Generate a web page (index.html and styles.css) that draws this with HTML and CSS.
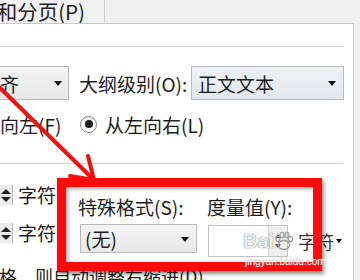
FILE: index.html
```html
<!DOCTYPE html>
<html lang="zh">
<head>
<meta charset="utf-8">
<link rel="stylesheet" href="styles.css">
</head>
<body>
<div class="screen">
  <div class="tabs">
    <div class="tab"><span class="tab-label">缩进和分页(P)</span></div>
  </div>
  <div class="body-row">
    <div class="panel">
      <div class="sep sep-top"></div>
      <div class="row row-general">
        <div class="select select-align"><span class="sel-text">对齐</span><i class="caret"></i></div>
        <span class="label label-level">大纲级别(O):</span>
        <div class="select select-level"><span class="sel-text">正文文本</span><i class="caret"></i></div>
      </div>
      <div class="row row-dir">
        <span class="cut-dir">右向左(F)</span>
        <span class="radio"><span class="radio-dot"></span></span>
        <span class="dir-text">从左向右(L)</span>
      </div>
      <div class="sep sep-mid"></div>
      <div class="indent">
        <div class="col-left">
          <div class="spin-row">
            <span class="mini-spin"><i class="tri-up"></i><i class="tri-down"></i></span>
            <span class="unit-text">字符</span><span class="dotsep">·</span>
          </div>
          <div class="spin-row spin-row2">
            <span class="mini-spin"><i class="tri-up"></i><i class="tri-down"></i></span>
            <span class="unit-text">字符</span><span class="dotsep">·</span>
          </div>
        </div>
        <div class="col-special">
          <div class="label">特殊格式(S):</div>
          <div class="select select-special"><span class="sel-text">(无)</span><i class="caret"></i></div>
        </div>
        <div class="col-value">
          <div class="label">度量值(Y):</div>
          <div class="value-line">
            <div class="spinbox"><span class="spin-btns"><i class="tri-up small"></i><i class="tri-down small"></i></span></div>
            <span class="unit-drop">字符</span><i class="caret caret-unit"></i>
          </div>
        </div>
      </div>
      <div class="bottom-text">网格，则自动调整右缩进(D)</div>
    </div>
    <div class="side"></div>
  </div>

  <div class="highlight"></div>
  <svg class="arrow" width="360" height="280" viewBox="0 0 360 280">
    <line x1="-4" y1="84" x2="94" y2="180" stroke="#f01010" stroke-width="4" stroke-linecap="round"/>
    <line x1="94" y1="180" x2="88" y2="156" stroke="#f01010" stroke-width="4" stroke-linecap="round"/>
    <line x1="94" y1="180" x2="70" y2="176" stroke="#f01010" stroke-width="4" stroke-linecap="round"/>
  </svg>
  <div class="watermark">
    <div class="wm-top">
      <span class="wm-bai">Bai</span>
      <svg class="wm-paw" width="18" height="20" viewBox="0 0 18 20">
        <ellipse cx="9" cy="14" rx="5.5" ry="4.5" fill="none" stroke="#9a9a9a" stroke-width="1.4"/>
        <ellipse cx="3" cy="8" rx="2" ry="2.6" fill="none" stroke="#9a9a9a" stroke-width="1.2"/>
        <ellipse cx="7" cy="4" rx="2" ry="2.6" fill="none" stroke="#9a9a9a" stroke-width="1.2"/>
        <ellipse cx="12" cy="4" rx="2" ry="2.6" fill="none" stroke="#9a9a9a" stroke-width="1.2"/>
        <ellipse cx="15.5" cy="8" rx="2" ry="2.6" fill="none" stroke="#9a9a9a" stroke-width="1.2"/>
      </svg>
    </div>
    <div class="wm-url">jingyan.baidu.com</div>
  </div>
</div>
</body>
</html>
```
FILE: styles.css
```css
* { box-sizing: border-box; }
html, body { margin: 0; padding: 0; }
body {
  width: 360px;
  height: 280px;
  overflow: hidden;
  background: #f0f0f0;
  font-family: "Noto Sans CJK SC", "Noto Sans", sans-serif;
  color: #1e1e1e;
  font-size: 19px;
}
.screen { position: relative; width: 360px; height: 280px; overflow: hidden; }

.tabs { height: 23px; display: flex; }
.tab {
  width: 105px;
  height: 23px;
  border-right: 1px solid #cfcfcf;
  background: #f2f2f2;
  display: flex;
  justify-content: flex-end;
  align-items: center;
  overflow: hidden;
  white-space: nowrap;
  padding-right: 19px;
  line-height: 23px;
  font-size: 20.5px;
}
.body-row { display: flex; height: 257px; }
.panel {
  width: 354px;
  height: 257px;
  background: #fff;
  border-top: 1px solid #c8c8c8;
  border-right: 1px solid #c8c8c8;
  overflow: hidden;
}
.side { flex: 1; background: #f0f0f0; }

.sep { width: 343px; height: 2px; background: #d5d5d5; border-bottom: 1px solid #fff; }
.sep-top { margin-top: 22px; }
.sep-mid { margin-top: 27px; }

.row { display: flex; align-items: center; white-space: nowrap; }
.row-general { margin-top: 18px; height: 34px; }
.select {
  position: relative;
  height: 34px;
  display: flex;
  align-items: center;
  border: 1px solid #b9b9b9;
  background: linear-gradient(#f4f4f4, #e8e8e8);
  overflow: hidden;
  white-space: nowrap;
}
.sel-text { line-height: 1; }
.caret {
  position: absolute;
  width: 0; height: 0;
  border-left: 4.5px solid transparent;
  border-right: 4.5px solid transparent;
  border-top: 5px solid #111;
  top: 50%;
  margin-top: -2px;
}
.select-align { margin-left: -30px; width: 99px; padding-left: 10px; }
.select-align .caret { right: 6px; }
.label-level { margin-left: 10px; width: 112px; }
.select-level { width: 153px; padding-left: 6px; background: linear-gradient(#eef1f4, #e4e8ec); }
.select-level .caret { right: 7px; }

.row-dir { margin-top: 12px; height: 24px; }
.cut-dir { margin-left: -19px; width: 99px; }
.radio {
  width: 17px; height: 17px;
  border-radius: 50%;
  border: 1px solid #8a8a8a;
  background: linear-gradient(#f0f0f0, #ffffff);
  display: flex; align-items: center; justify-content: center;
}
.radio-dot { width: 8px; height: 8px; border-radius: 50%; background: #1e1e1e; }
.dir-text { margin-left: 8px; }

.indent { display: flex; height: 101px; white-space: nowrap; }
.col-left { width: 78px; padding-top: 20px; }
.spin-row { display: flex; align-items: center; height: 20px; }
.spin-row2 { margin-top: 18px; }
.mini-spin {
  width: 13px; height: 20px;
  border-right: 1px solid #b8b8b8;
  display: flex; flex-direction: column; align-items: center; justify-content: center; gap: 3px;
  background: #ececec;
}
.tri-up { width: 0; height: 0; border-left: 5px solid transparent; border-right: 5px solid transparent; border-bottom: 5px solid #222; }
.tri-down { width: 0; height: 0; border-left: 5px solid transparent; border-right: 5px solid transparent; border-top: 5px solid #222; }
.tri-up.small { border-left-width: 3px; border-right-width: 3px; border-bottom-width: 4px; border-bottom-color: #555; }
.tri-down.small { border-left-width: 3px; border-right-width: 3px; border-top-width: 4px; border-top-color: #555; }
.unit-text { margin-left: 5px; line-height: 20px; }
.dotsep { margin-left: 2px; color: #666; font-size: 12px; }

.col-special { width: 129px; padding-top: 30px; }
.col-special .label { height: 24px; line-height: 24px; }
.select-special { margin-top: 5px; margin-left: 2px; width: 117px; height: 29px; padding-left: 4px; }
.select-special .caret { right: 7px; }

.col-value { padding-top: 30px; }
.col-value .label { height: 24px; line-height: 24px; }
.value-line { margin-top: 6px; display: flex; align-items: center; position: relative; }
.spinbox {
  margin-left: 1px;
  width: 80px; height: 32px;
  border: 1px solid #c2c2c2;
  background: #fff;
  display: flex; justify-content: flex-end;
}
.spin-btns {
  width: 19px; height: 100%;
  border-left: 1px solid #d4d4d4;
  background: #eeeeee;
  display: flex; flex-direction: column; align-items: center; justify-content: center; gap: 6px;
}
.unit-drop { margin-left: 10px; color: #333; font-size: 18px; }
.caret-unit { position: static; margin: 0 0 0 2px; border-left-width: 3px; border-right-width: 3px; border-top-width: 4px; }

.bottom-text { margin-left: -19px; line-height: 20px; white-space: nowrap; font-size: 18px; }

/* annotation overlays */
.highlight {
  position: absolute;
  left: 57px; top: 178px;
  width: 265px; height: 93px;
  border: 9px solid #ff0a0a;
  box-shadow: 2px 3px 4px rgba(0,0,0,0.45), inset 2px 2px 4px rgba(0,0,0,0.35);
}
.arrow { position: absolute; left: 0; top: 0; pointer-events: none; }
.watermark {
  position: absolute;
  left: 243px; top: 230px;
  color: rgba(255,255,255,0.85);
  text-shadow: 0 0 1px #888, 0 0 1px #888;
  font-family: "Liberation Sans", sans-serif;
}
.wm-top { display: flex; align-items: center; height: 22px; }
.wm-bai { font-size: 20px; font-weight: bold; line-height: 22px; }
.wm-paw { margin: 0 1px; }
.wm-url { font-size: 10px; line-height: 12px; margin-top: 4px; margin-left: 2px; color: rgba(255,255,255,0.9); text-shadow: 0 0 1px #aaa; }
```
